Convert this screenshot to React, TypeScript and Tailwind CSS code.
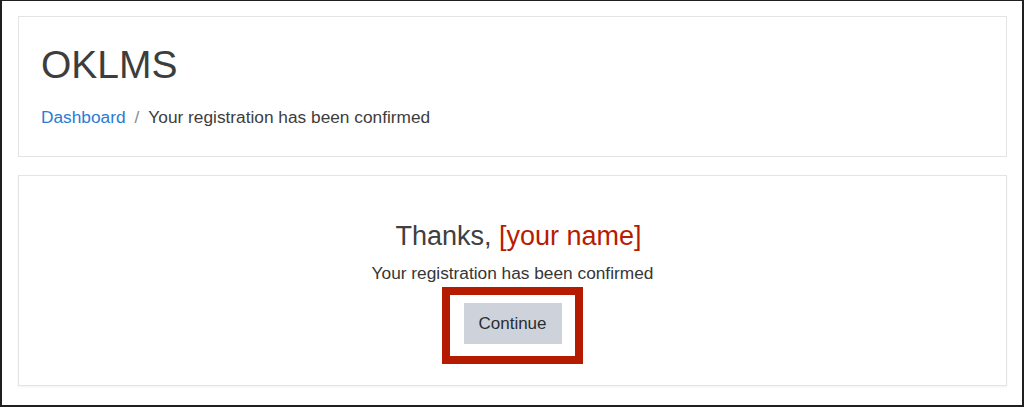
import React from "react";

export default function App() {
  return (
    <div
      className="w-[1024px] h-[407px] bg-white border-[#1f1f1f] border-l-2 border-r-2 border-t border-b-2 box-border overflow-hidden"
      style={{ fontFamily: '"Liberation Sans", Arial, Helvetica, sans-serif' }}
    >
      <div className="pl-[16px] pr-[15px] pt-[15px] flex flex-col gap-[18px]">
        {/* Header card */}
        <div className="h-[141px] border border-[#e4e4e4] bg-white pl-[22px] pt-[24px] box-border">
          <h1 className="text-[39px] leading-[48px] text-[#3d3d3d] font-normal">OKLMS</h1>
          <nav className="mt-[16px] flex items-center text-[17.3px] leading-[25.5px]">
            <a className="text-[#2a7bd4]">Dashboard</a>
            <span className="px-[9px] text-[#84898e]">/</span>
            <span className="text-[#3d3d3d]">Your registration has been confirmed</span>
          </nav>
        </div>

        {/* Confirmation card */}
        <div className="h-[211px] border border-[#e4e4e4] bg-white box-border pt-[44px] flex flex-col items-center shadow-[0_1px_2px_rgba(0,0,0,0.06)]">
          <h2 className="text-[27px] leading-[32px] font-normal text-[#404040] pl-[12px]">
            Thanks, <span className="text-[#b71c00]">[your name]</span>
          </h2>
          <p className="mt-[9px] text-[17.3px] leading-[25.5px] text-[#363636]">
            Your registration has been confirmed
          </p>
          <div className="relative mt-[16px]">
            <button className="w-[98px] h-[41px] bg-[#ced3db] text-[17px] text-[#2a2e31] flex items-center justify-center pt-[2px]">
              Continue
            </button>
            <div className="absolute left-[-22px] top-[-16px] w-[141px] h-[77px] border-8 border-[#b41b00] box-border pointer-events-none" />
          </div>
        </div>
      </div>
    </div>
  );
}
